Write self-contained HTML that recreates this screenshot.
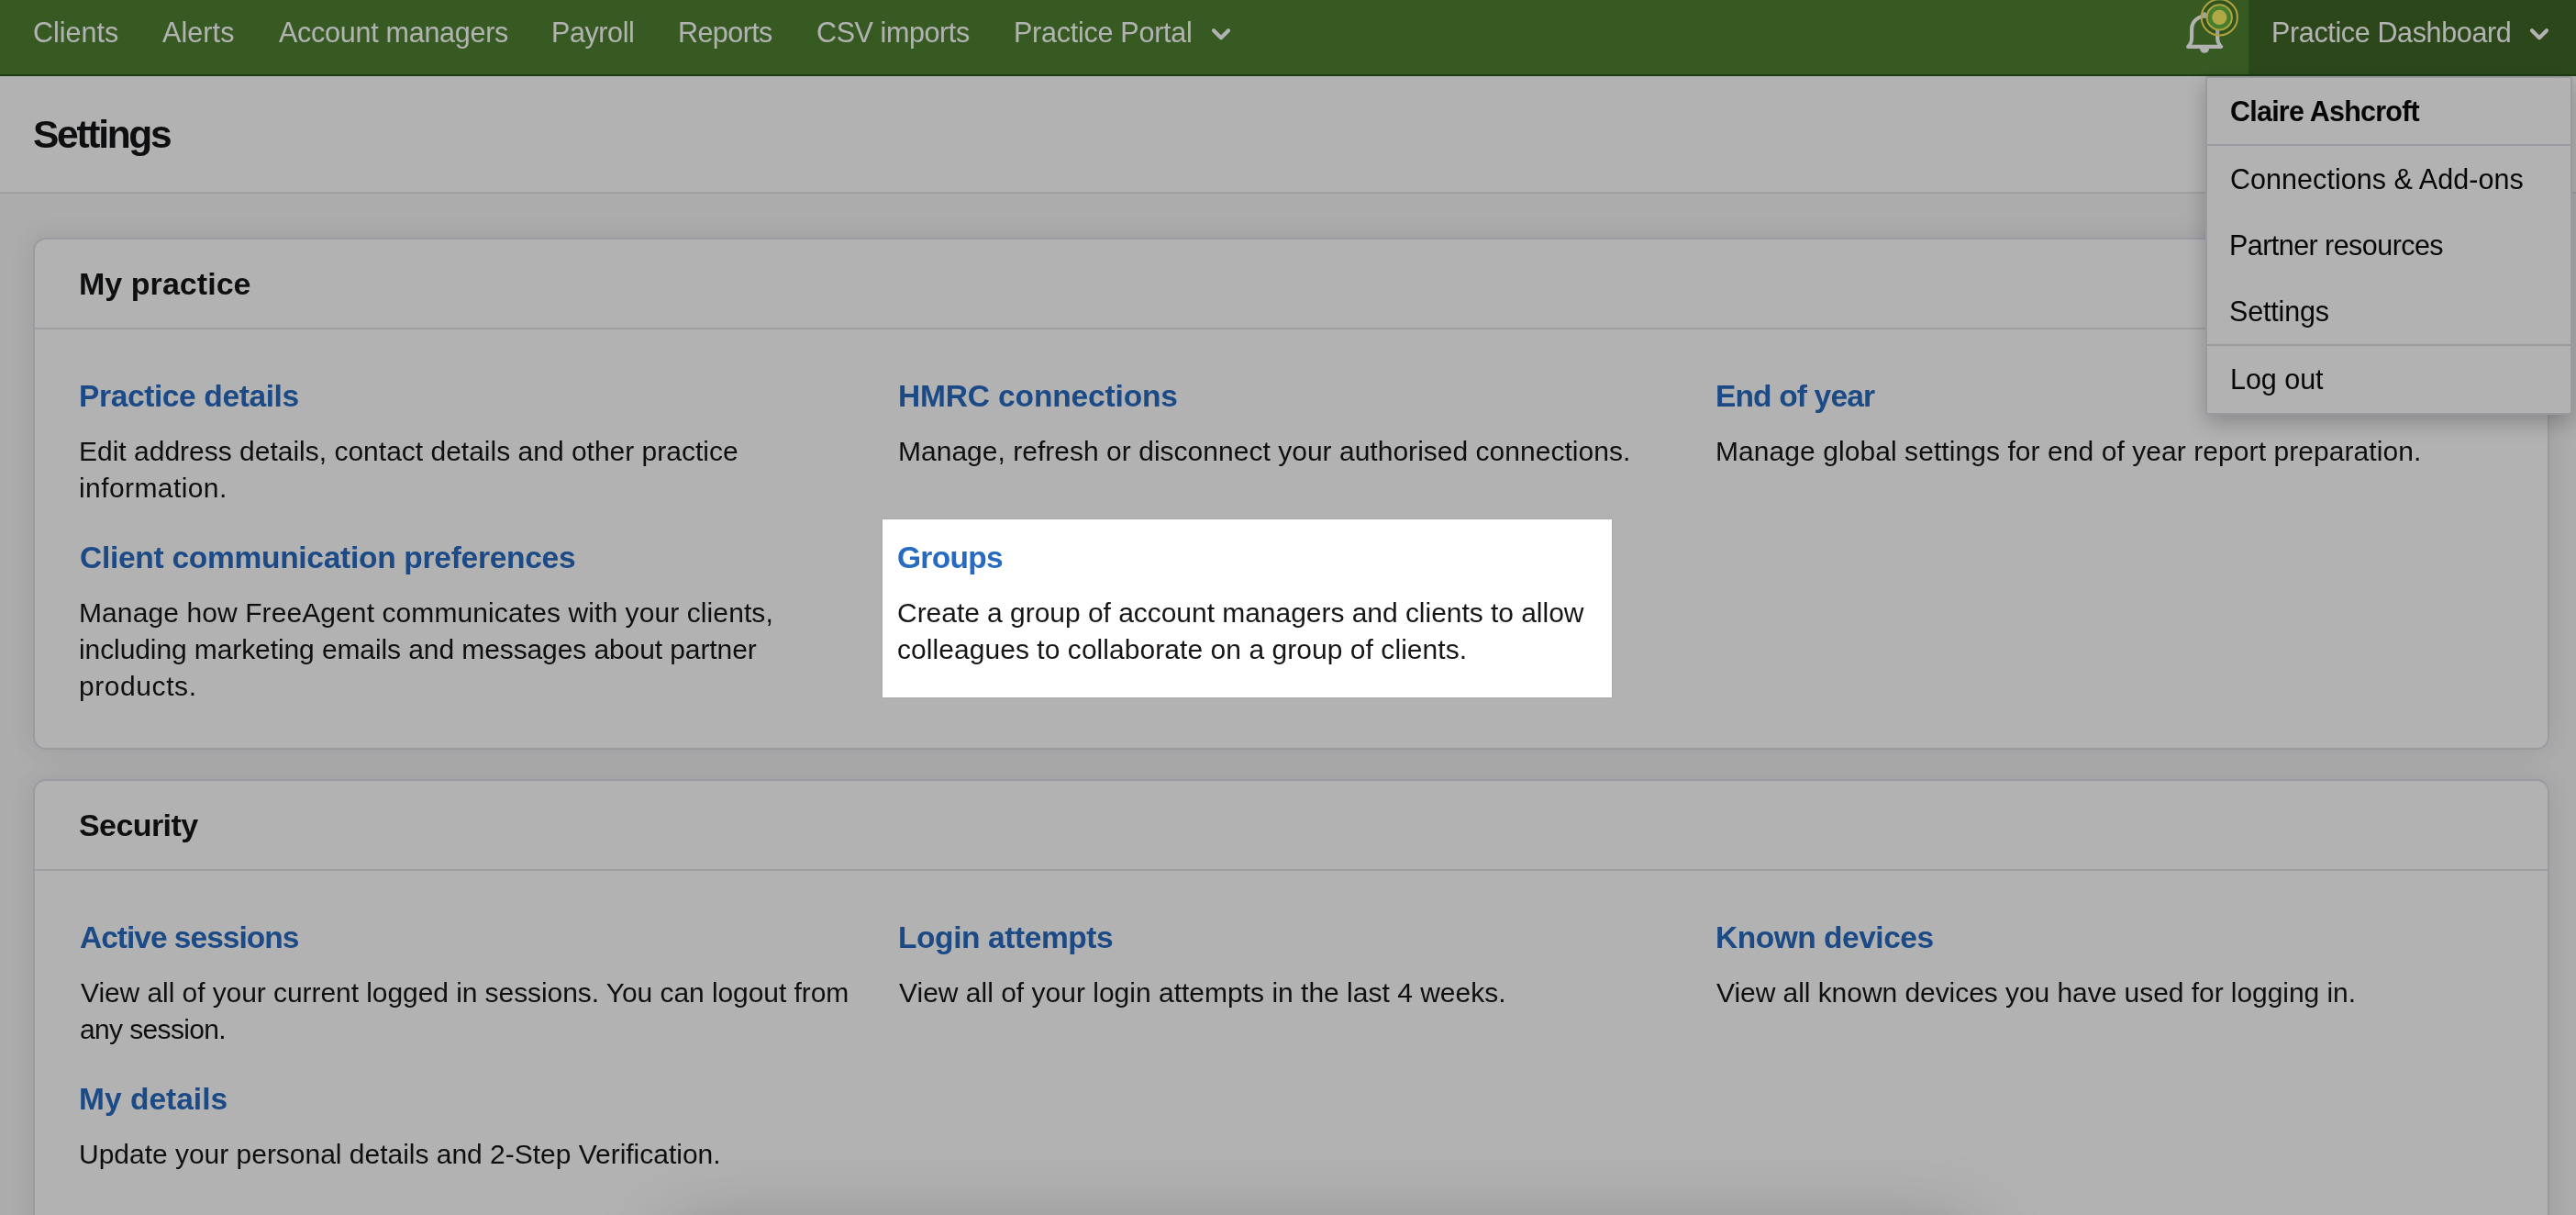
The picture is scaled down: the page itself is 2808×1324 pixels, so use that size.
<!DOCTYPE html><html><head><meta charset="utf-8"><title>Settings</title><style>
*{box-sizing:border-box}
html,body{margin:0;padding:0}
body{width:2808px;height:1324px;overflow:hidden;position:relative;background:#f6f6f7;font-family:"Liberation Sans",sans-serif;}
.t{position:absolute;display:block;margin:0;padding:0;text-decoration:none;white-space:nowrap;line-height:40px;height:40px;will-change:transform}
#nav{position:absolute;left:0;top:0;width:2808px;height:83px;background:#4f8233;border-bottom:2px solid #2b5519}
#navdark{position:absolute;left:2451px;top:0;width:357px;height:81px;background:#3f6828}
#hdr{position:absolute;left:0;top:83px;width:2808px;height:128px;background:#fff;border-bottom:2px solid #e2e4ea}
.card{position:absolute;left:36px;width:2743px;background:#fff;border:2px solid #dddfe6;border-radius:14px;box-shadow:0 0 26px 2px rgba(40,45,60,.085)}
.card .sep{position:absolute;left:0;right:0;height:2px;background:#e2e4ea}
#dd{position:absolute;left:2404px;top:83px;width:400px;height:369px;background:#fff;border:2px solid #dcdde4;border-radius:3px;box-shadow:0 9px 22px rgba(15,18,25,.24)}
#dd .sep{position:absolute;left:0;right:0;height:2px;background:#dcdee5}
#spot{position:absolute;left:962px;top:566px;width:795px;height:194px;box-shadow:0 0 0 4000px rgba(0,0,0,.3), 0 0 2px 0 rgba(0,0,0,.14)}
#below{position:absolute;left:745px;top:1352px;width:1390px;height:200px;background:#fff;box-shadow:0 0 85px 10px rgba(0,0,0,.25)}
svg{position:absolute;overflow:visible}
</style></head><body>
<div id="hdr"></div>
<div class="card" style="top:259px;height:558px"><div class="sep" style="top:96px"></div></div>
<div class="card" style="top:849px;height:600px"><div class="sep" style="top:96px"></div></div>
<h1 class="t" style="left:36.10px;top:126.50px;font-size:42.5px;font-weight:700;color:#151618;letter-spacing:-2.288px">Settings</h1>
<h2 class="t" style="left:86.10px;top:289.00px;font-size:34px;font-weight:700;color:#151618;letter-spacing:0.041px">My practice</h2>
<h2 class="t" style="left:86.30px;top:879.00px;font-size:34px;font-weight:700;color:#151618;letter-spacing:-0.578px">Security</h2>
<a href="#" class="t" style="left:86.10px;top:411.50px;font-size:33.5px;font-weight:700;color:#276bc1;letter-spacing:-0.376px">Practice details</a>
<a href="#" class="t" style="left:978.56px;top:411.50px;font-size:33.5px;font-weight:700;color:#276bc1;letter-spacing:-0.143px">HMRC connections</a>
<a href="#" class="t" style="left:1869.88px;top:411.50px;font-size:33.5px;font-weight:700;color:#276bc1;letter-spacing:-0.845px">End of year</a>
<a href="#" class="t" style="left:87.12px;top:587.50px;font-size:33.5px;font-weight:700;color:#276bc1;letter-spacing:-0.279px">Client communication preferences</a>
<a href="#" class="t" style="left:978.10px;top:587.50px;font-size:33.5px;font-weight:700;color:#276bc1;letter-spacing:-0.717px">Groups</a>
<a href="#" class="t" style="left:86.52px;top:1001.50px;font-size:33.5px;font-weight:700;color:#276bc1;letter-spacing:-0.998px">Active sessions</a>
<a href="#" class="t" style="left:979.12px;top:1001.50px;font-size:33.5px;font-weight:700;color:#276bc1;letter-spacing:-0.411px">Login attempts</a>
<a href="#" class="t" style="left:1869.88px;top:1001.50px;font-size:33.5px;font-weight:700;color:#276bc1;letter-spacing:-0.480px">Known devices</a>
<a href="#" class="t" style="left:86.12px;top:1177.50px;font-size:33.5px;font-weight:700;color:#276bc1;letter-spacing:0.021px">My details</a>
<p class="t" style="left:86.10px;top:471.50px;font-size:30px;font-weight:400;color:#151618;letter-spacing:-0.002px">Edit address details, contact details and other practice</p>
<p class="t" style="left:86.10px;top:511.50px;font-size:30px;font-weight:400;color:#151618;letter-spacing:0.413px">information.</p>
<p class="t" style="left:978.56px;top:471.50px;font-size:30px;font-weight:400;color:#151618;letter-spacing:0.020px">Manage, refresh or disconnect your authorised connections.</p>
<p class="t" style="left:1869.88px;top:471.50px;font-size:30px;font-weight:400;color:#151618;letter-spacing:0.067px">Manage global settings for end of year report preparation.</p>
<p class="t" style="left:86.12px;top:647.50px;font-size:30px;font-weight:400;color:#151618;letter-spacing:0.093px">Manage how FreeAgent communicates with your clients,</p>
<p class="t" style="left:86.12px;top:687.50px;font-size:30px;font-weight:400;color:#151618;letter-spacing:-0.096px">including marketing emails and messages about partner</p>
<p class="t" style="left:85.52px;top:727.50px;font-size:30px;font-weight:400;color:#151618;letter-spacing:0.578px">products.</p>
<p class="t" style="left:978.10px;top:647.50px;font-size:30px;font-weight:400;color:#151618;letter-spacing:-0.037px">Create a group of account managers and clients to allow</p>
<p class="t" style="left:978.10px;top:687.50px;font-size:30px;font-weight:400;color:#151618;letter-spacing:0.050px">colleagues to collaborate on a group of clients.</p>
<p class="t" style="left:88.12px;top:1061.50px;font-size:30px;font-weight:400;color:#151618;letter-spacing:-0.069px">View all of your current logged in sessions. You can logout from</p>
<p class="t" style="left:87.12px;top:1101.50px;font-size:30px;font-weight:400;color:#151618;letter-spacing:-0.641px">any session.</p>
<p class="t" style="left:979.78px;top:1061.50px;font-size:30px;font-weight:400;color:#151618;letter-spacing:0.002px">View all of your login attempts in the last 4 weeks.</p>
<p class="t" style="left:1871.10px;top:1061.50px;font-size:30px;font-weight:400;color:#151618;letter-spacing:-0.055px">View all known devices you have used for logging in.</p>
<p class="t" style="left:86.12px;top:1237.50px;font-size:30px;font-weight:400;color:#151618;letter-spacing:-0.017px">Update your personal details and 2-Step Verification.</p>
<div id="below"></div>
<div id="nav"></div><div id="navdark"></div>
<a href="#" class="t" style="left:35.88px;top:15.00px;font-size:30.5px;font-weight:400;color:#ffffff;letter-spacing:-0.013px">Clients</a>
<a href="#" class="t" style="left:177.10px;top:15.00px;font-size:30.5px;font-weight:400;color:#ffffff;letter-spacing:0.089px">Alerts</a>
<a href="#" class="t" style="left:304.10px;top:15.00px;font-size:30.5px;font-weight:400;color:#ffffff;letter-spacing:-0.263px">Account managers</a>
<a href="#" class="t" style="left:601.10px;top:15.00px;font-size:30.5px;font-weight:400;color:#ffffff;letter-spacing:-0.409px">Payroll</a>
<a href="#" class="t" style="left:738.88px;top:15.00px;font-size:30.5px;font-weight:400;color:#ffffff;letter-spacing:-0.572px">Reports</a>
<a href="#" class="t" style="left:890.10px;top:15.00px;font-size:30.5px;font-weight:400;color:#ffffff;letter-spacing:-0.398px">CSV imports</a>
<a href="#" class="t" style="left:1105.22px;top:15.00px;font-size:30.5px;font-weight:400;color:#ffffff;letter-spacing:-0.253px">Practice Portal</a>
<a href="#" class="t" style="left:2475.56px;top:15.00px;font-size:30.5px;font-weight:400;color:#ffffff;letter-spacing:-0.359px">Practice Dashboard</a>
<svg style="left:1321px;top:31px" width="20" height="13" viewBox="0 0 20 13"><path d="M2 2.2 L10 10.2 L18 2.2" fill="none" stroke="#fff" stroke-width="4.1" stroke-linecap="round" stroke-linejoin="round"/></svg>
<svg style="left:2758px;top:31px" width="20" height="13" viewBox="0 0 20 13"><path d="M2 2.2 L10 10.2 L18 2.2" fill="none" stroke="#fff" stroke-width="4.1" stroke-linecap="round" stroke-linejoin="round"/></svg>
<svg style="left:2380px;top:0" width="72" height="62" viewBox="0 0 72 62">
<path d="M5.1 50.9 C7.6 48.4 9.1 45.4 9.1 41.5 V31.85 A14.05 14.05 0 0 1 37.2 31.85 V41.5 C37.2 45.4 38.7 48.4 41.2 50.9 Z" fill="none" stroke="#fff" stroke-width="4.1" stroke-linejoin="round"/>
<circle cx="23.1" cy="16" r="2.7" fill="#fff"/>
<path d="M17.9 52.6 A5.2 5.2 0 0 0 28.3 52.6 Z" fill="#fff"/>
<circle cx="39.3" cy="18.9" r="19.6" fill="rgba(0,30,0,0.10)" stroke="#fde95a" stroke-width="2"/>
<circle cx="39.3" cy="18.9" r="13.6" fill="#64b53f" stroke="#fde95a" stroke-width="2"/>
<circle cx="39.3" cy="18.9" r="8.1" fill="#fdf063"/>
</svg>
<div id="dd"><div class="sep" style="top:72px"></div><div class="sep" style="top:290px"></div></div>
<strong class="t" style="left:2430.56px;top:101.00px;font-size:30.5px;font-weight:700;color:#0b0b0b;letter-spacing:-0.771px">Claire Ashcroft</strong>
<a href="#" class="t" style="left:2430.56px;top:175.00px;font-size:30.5px;font-weight:400;color:#0b0b0b;letter-spacing:0.046px">Connections &amp; Add-ons</a>
<a href="#" class="t" style="left:2429.56px;top:247.00px;font-size:30.5px;font-weight:400;color:#0b0b0b;letter-spacing:-0.549px">Partner resources</a>
<a href="#" class="t" style="left:2429.76px;top:319.00px;font-size:30.5px;font-weight:400;color:#0b0b0b;letter-spacing:-0.158px">Settings</a>
<a href="#" class="t" style="left:2430.78px;top:393.00px;font-size:30.5px;font-weight:400;color:#0b0b0b;letter-spacing:-0.030px">Log out</a>
<div id="spot"></div>
</body></html>
